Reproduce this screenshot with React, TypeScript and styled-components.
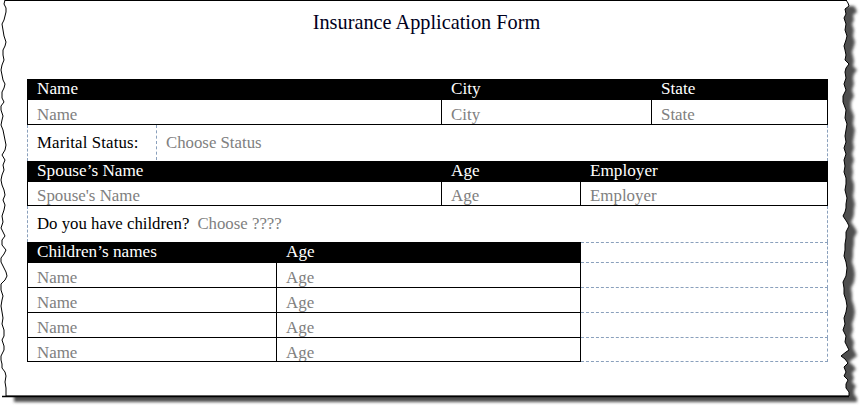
import React from "react";
import styled, { createGlobalStyle } from "styled-components";

const Global = createGlobalStyle`
  html, body { margin: 0; padding: 0; background: #fff; }
  body { font-family: "Liberation Serif", "Times New Roman", serif; font-size: 16px; color: #000; overflow: hidden; }
`;

const Page = styled.div`
  position: relative;
  width: 865px;
  height: 412px;
  box-sizing: border-box;
  padding: 0 37px 0 27px;
  overflow: hidden;
`;

const Backdrop = styled.svg`
  position: absolute;
  left: 0;
  top: 0;
`;

const Title = styled.h1`
  position: relative;
  margin: 0;
  height: 79px;
  padding: 10px 2px 0 0;
  box-sizing: border-box;
  text-align: center;
  font-size: 20.3px;
  line-height: 24px;
  font-weight: normal;
  color: #000020;
`;

const Form = styled.div`
  position: relative;
  width: 801px;
`;

const HeaderRow = styled.div<{ $cols: string }>`
  display: grid;
  grid-template-columns: ${(p) => p.$cols};
  height: 21px;
  background: #000;
  color: #fff;
  font-size: 17.2px;
  line-height: 19px;
`;

const HeaderCell = styled.div`
  padding-left: 10px;
  white-space: nowrap;
`;

const InputRow = styled.div<{ $cols: string; $height: number; $textTop?: number }>`
  display: grid;
  grid-template-columns: ${(p) => p.$cols};
  height: ${(p) => p.$height}px;
  box-sizing: border-box;
  border: 1px solid #000;
  border-top: 0;
  & > * {
    padding-top: ${(p) => p.$textTop ?? 5}px;
  }
`;

const InputCell = styled.div`
  padding-left: 9px;
  line-height: 20px;
  font-size: 16.9px;
  color: #808080;
  white-space: nowrap;
  overflow: hidden;
  & + & {
    border-left: 1px solid #000;
  }
`;

const QuestionRow = styled.div`
  display: flex;
  align-items: center;
  height: 36px;
  box-sizing: border-box;
  border-left: 1px dashed #8aa0bc;
  border-right: 1px dashed #8aa0bc;
  font-size: 16.8px;
  padding-bottom: 1px;
`;

const Label = styled.span<{ $width?: number; $spread?: number }>`
  box-sizing: border-box;
  padding-left: 9px;
  white-space: nowrap;
  ${(p) => (p.$width ? `width: ${p.$width}px;` : "")}
  ${(p) => (p.$spread ? `letter-spacing: ${p.$spread}px;` : "")}
`;

const ChoiceCell = styled.span<{ $divided?: boolean; $gap: number }>`
  display: flex;
  align-items: center;
  align-self: stretch;
  padding-left: ${(p) => p.$gap}px;
  color: #808080;
  white-space: nowrap;
  ${(p) => (p.$divided ? "border-left: 1px dashed #8aa0bc;" : "")}
`;

const ChildrenArea = styled.div`
  display: grid;
  grid-template-columns: 554px 247px;
`;

const Filler = styled.div`
  display: flex;
  flex-direction: column;
`;

const FillerCell = styled.div<{ $height: number; $top?: boolean }>`
  height: ${(p) => p.$height}px;
  box-sizing: border-box;
  border-right: 1px dashed #8aa0bc;
  border-bottom: 1px dashed #8aa0bc;
  ${(p) => (p.$top ? "border-top: 1px dashed #8aa0bc;" : "")}
`;

const leftEdge: [number, number][] = [
  [0,5],[4,4],[8,6],[12,6],[16,5],[20,4],[24,2],[30,3],[36,4],[42,6],[46,5],[50,3],[55,3],[60,4],[65,2],[70,1],[75,2],[80,3],[84,5],[88,4],[92,2],[98,2],[102,4],[106,1],[110,1],[116,3],[120,2],[125,1],[130,3],[135,4],[140,5],[145,6],[150,5],[155,2],[160,5],[165,3],[170,4],[175,2],[180,1],[185,2],[190,4],[195,5],[200,3],[205,5],[210,4],[216,2],[222,3],[228,1],[232,3],[236,5],[240,2],[245,2],[250,6],[254,4],[258,1],[262,1],[268,4],[272,6],[276,7],[280,5],[284,1],[290,1],[296,3],[300,2],[306,1],[312,2],[318,3],[324,2],[330,4],[336,4],[340,2],[346,4],[350,4],[356,1],[360,1],[364,2],[368,2],[372,5],[376,6],[382,5],[388,6],[396,6]
];

const rightEdge: [number, number][] = [
  [0,846],[3,848],[6,849],[9,845],[14,846],[18,844],[24,846],[30,845],[36,847],[40,846],[46,844],[50,845],[55,846],[60,845],[64,849],[68,846],[72,845],[78,846],[84,844],[90,846],[96,843],[102,843],[110,846],[118,845],[124,847],[130,846],[136,845],[142,846],[148,844],[154,846],[160,844],[166,845],[172,844],[178,846],[184,846],[190,845],[198,847],[204,846],[208,846],[212,845],[216,843],[222,847],[226,849],[232,846],[238,846],[244,845],[250,845],[256,844],[262,846],[268,847],[276,846],[282,843],[288,844],[294,844],[300,846],[306,847],[312,846],[318,844],[324,845],[330,843],[336,846],[342,845],[346,847],[350,849],[352,846],[356,841],[359,845],[363,848],[367,844],[372,846],[376,844],[380,848],[384,846],[388,846],[392,849],[396,849]
];

const outline =
  "M" + leftEdge.map(([y, x]) => `${x},${y}`).join(" L") +
  " L" + [...rightEdge].reverse().map(([y, x]) => `${x},${y}`).join(" L") + " Z";

const Paper = () => (
  <Backdrop width={865} height={412} viewBox="0 0 865 412">
    <defs>
      <filter id="tornShadow" x="-5%" y="-5%" width="110%" height="110%">
        <feGaussianBlur stdDeviation="1.5" />
      </filter>
    </defs>
    <path d={outline} fill="#505050" transform="translate(8 6)" filter="url(#tornShadow)" />
    <path d={outline} fill="#fff" />
    <path d={outline} fill="none" stroke="#000" strokeWidth="1" />
    <path d="M5 0.5H847" stroke="#000" strokeWidth="1" />
    <path d="M2 396.5H849" stroke="#000" strokeWidth="1.4" />
  </Backdrop>
);

const mainCols = "414px 210px 1fr";
const spouseCols = "414px 139px 1fr";
const childCols = "249px 1fr";
const children = [25, 25, 25, 24];

export default function App() {
  return (
    <Page>
      <Global />
      <Paper />
      <Title>Insurance Application Form</Title>
      <Form>
        <HeaderRow $cols={mainCols}>
          <HeaderCell>Name</HeaderCell>
          <HeaderCell>City</HeaderCell>
          <HeaderCell>State</HeaderCell>
        </HeaderRow>
        <InputRow $cols="413px 210px 1fr" $height={25}>
          <InputCell>Name</InputCell>
          <InputCell>City</InputCell>
          <InputCell>State</InputCell>
        </InputRow>
        <QuestionRow>
          <Label $width={128} $spread={0.15}>Marital Status:</Label>
          <ChoiceCell $divided $gap={9}>Choose Status</ChoiceCell>
        </QuestionRow>
        <HeaderRow $cols={spouseCols}>
          <HeaderCell>Spouse’s Name</HeaderCell>
          <HeaderCell>Age</HeaderCell>
          <HeaderCell>Employer</HeaderCell>
        </HeaderRow>
        <InputRow $cols="413px 139px 1fr" $height={24} $textTop={4}>
          <InputCell>Spouse's Name</InputCell>
          <InputCell>Age</InputCell>
          <InputCell>Employer</InputCell>
        </InputRow>
        <QuestionRow>
          <Label>Do you have children?</Label>
          <ChoiceCell $gap={8}>Choose ????</ChoiceCell>
        </QuestionRow>
        <ChildrenArea>
          <div>
            <HeaderRow $cols={childCols}>
              <HeaderCell>Children’s names</HeaderCell>
              <HeaderCell>Age</HeaderCell>
            </HeaderRow>
            {children.map((h, i) => (
              <InputRow key={i} $cols="248px 1fr" $height={h}>
                <InputCell>Name</InputCell>
                <InputCell>Age</InputCell>
              </InputRow>
            ))}
          </div>
          <Filler>
            <FillerCell $height={21} $top />
            {children.map((h, i) => (
              <FillerCell key={i} $height={h} />
            ))}
          </Filler>
        </ChildrenArea>
      </Form>
    </Page>
  );
}
